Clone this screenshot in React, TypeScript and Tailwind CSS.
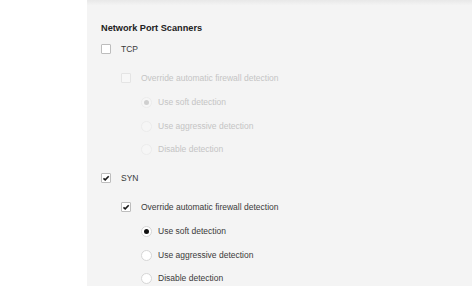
import React from "react";

const font = { fontFamily: '"Liberation Sans", Arial, sans-serif' };

function Check({ checked, disabled }: { checked?: boolean; disabled?: boolean }) {
  return (
    <span
      className={`flex h-[10px] w-[10px] shrink-0 items-center justify-center rounded-[1px] border ${
        disabled ? "border-[#e4e4e4] bg-[#f7f7f7]" : "border-[#bdbdbd] bg-white"
      }`}
    >
      {checked && (
        <svg viewBox="0 0 10 10" className="h-[8px] w-[8px]">
          <path d="M1.8 5.4 L4 7.4 L8.4 2.8" fill="none" stroke="#1a1a1a" strokeWidth="2" />
        </svg>
      )}
    </span>
  );
}

function Radio({ checked, disabled }: { checked?: boolean; disabled?: boolean }) {
  return (
    <span
      className={`flex h-[11px] w-[11px] shrink-0 items-center justify-center rounded-full border ${
        disabled ? "border-[#ececec] bg-[#f6f6f6]" : "border-[#d6d6d6] bg-white"
      }`}
    >
      {checked && (
        <span className={`h-[5px] w-[5px] rounded-full ${disabled ? "bg-[#cfcfcf]" : "bg-[#111]"}`} />
      )}
    </span>
  );
}

function Row({
  children,
  label,
  disabled,
  className,
}: {
  children: React.ReactNode;
  label: string;
  disabled?: boolean;
  className: string;
}) {
  return (
    <div className={`flex h-[16px] items-center gap-[10px] ${className}`}>
      {children}
      <span className={`text-[8.5px] leading-none ${disabled ? "text-[#c4c4c4]" : "text-[#3a3a3a]"}`}>{label}</span>
    </div>
  );
}

function Group({ name, enabled, top }: { name: string; enabled: boolean; top: string }) {
  const dis = !enabled;
  return (
    <>
      <Row label={name} className={top}>
        <Check checked={enabled} />
      </Row>
      <Row label="Override automatic firewall detection" disabled={dis} className="mt-[13px] pl-[20px]">
        <Check checked={enabled} disabled={dis} />
      </Row>
      <Row label="Use soft detection" disabled={dis} className="mt-[8px] pl-[40px] !gap-[6px]">
        <Radio checked disabled={dis} />
      </Row>
      <Row label="Use aggressive detection" disabled={dis} className="mt-[8px] pl-[40px] !gap-[6px]">
        <Radio disabled={dis} />
      </Row>
      <Row label="Disable detection" disabled={dis} className="mt-[7px] pl-[40px] !gap-[6px]">
        <Radio disabled={dis} />
      </Row>
    </>
  );
}

export default function App() {
  return (
    <div className="flex h-[288px] w-[474px] bg-white" style={font}>
      <div className="ml-[87px] flex h-[286px] w-[385px] flex-col bg-[#f4f4f4] pl-[14px]">
        <div className="-ml-[14px] h-[5px] bg-gradient-to-b from-[#e8e8e8] to-[#f3f3f3]" />
        <div className="mt-[16px] flex h-[16px] items-center text-[9.2px] font-bold leading-none text-[#222]">
          Network Port Scanners
        </div>
        <Group name="TCP" enabled={false} top="mt-[4px]" />
        <Group name="SYN" enabled top="mt-[13px]" />
      </div>
    </div>
  );
}
